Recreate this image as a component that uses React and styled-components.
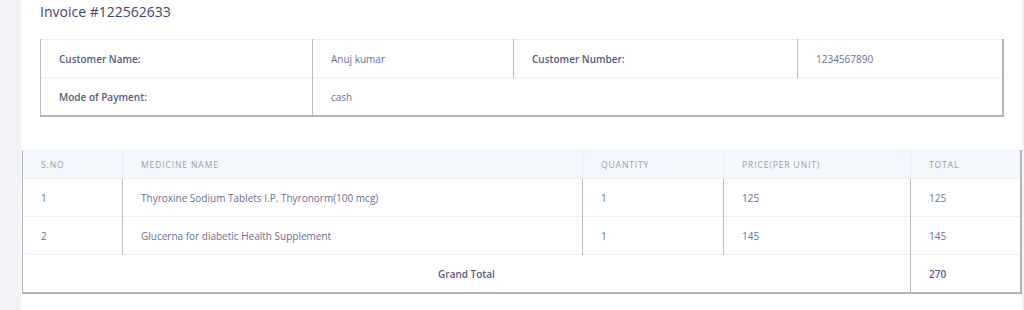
import React from "react";
import styled, { createGlobalStyle } from "styled-components";

const GlobalStyle = createGlobalStyle`
  html, body {
    margin: 0;
    padding: 0;
    background: #f2f3f8;
    font-family: "Open Sans", "Noto Sans", sans-serif;
  }
`;

const Page = styled.div`
  display: flex;
  padding: 0 2px 0 21px;
  min-height: 310px;
  box-sizing: border-box;
`;

const Card = styled.div`
  flex: 1;
  background: #fff;
  padding-bottom: 12px;
`;

const Title = styled.h3`
  margin: 0;
  padding: 2px 19px 0;
  font-size: 14px;
  line-height: 20px;
  font-weight: 500;
  color: #3f4566;
`;

const InfoTable = styled.table`
  width: calc(100% - 37px);
  margin: 17px 18px 0 19px;
  border-collapse: collapse;
  table-layout: fixed;
  border-top: 1px solid #f0f1f4;
  border-right: 2px solid #b4b4b4;
  border-bottom: 2px solid #b4b4b4;
`;

const ItemTable = styled.table`
  width: calc(100% - 1px);
  margin: 33px 0 0 1px;
  border-collapse: collapse;
  table-layout: fixed;
  border-right: 2px solid #b4b4b4;
  border-bottom: 2px solid #b4b4b4;
`;

const Row = styled.tr`
  border-top: 1px solid #eef0f4;
`;

const Cell = styled.td`
  height: 37px;
  padding: 0 18px;
  border-left: 1px solid #b9b9b9;
  font-size: 10px;
  font-weight: ${(p) => (p.$strong ? 600 : 400)};
  color: ${(p) => (p.$strong ? "#565c7d" : "#6a7090")};
  text-align: ${(p) => (p.$center ? "center" : "left")};
  white-space: nowrap;
`;

const HeadRow = styled.tr`
  background: #f4f7fb;
  border-top: 1px solid #eef1f5;
`;

const HeadCell = styled.th`
  height: 27px;
  padding: 0 18px;
  border-left: 1px solid #e9edf3;
  font-size: 8.5px;
  font-weight: 400;
  letter-spacing: 0.9px;
  text-transform: uppercase;
  text-align: left;
  color: #979db2;
  &:first-child {
    border-left: 1px solid #b9b9b9;
  }
`;

const items = [
  { no: 1, name: "Thyroxine Sodium Tablets I.P. Thyronorm(100 mcg)", qty: 1, price: 125 },
  { no: 2, name: "Glucerna for diabetic Health Supplement", qty: 1, price: 145 },
];

export default function App() {
  const grandTotal = items.reduce((sum, it) => sum + it.qty * it.price, 0);

  return (
    <Page>
      <GlobalStyle />
      <Card>
        <Title>Invoice #122562633</Title>

        <InfoTable>
          <colgroup>
            <col style={{ width: 272 }} />
            <col style={{ width: 201 }} />
            <col style={{ width: 284 }} />
            <col />
          </colgroup>
          <tbody>
            <Row>
              <Cell $strong>Customer Name:</Cell>
              <Cell>Anuj kumar</Cell>
              <Cell $strong>Customer Number:</Cell>
              <Cell>1234567890</Cell>
            </Row>
            <Row>
              <Cell $strong>Mode of Payment:</Cell>
              <Cell colSpan={3}>cash</Cell>
            </Row>
          </tbody>
        </InfoTable>

        <ItemTable>
          <colgroup>
            <col style={{ width: 100 }} />
            <col style={{ width: 460 }} />
            <col style={{ width: 141 }} />
            <col style={{ width: 187 }} />
            <col />
          </colgroup>
          <thead>
            <HeadRow>
              <HeadCell>S.No</HeadCell>
              <HeadCell>Medicine Name</HeadCell>
              <HeadCell>Quantity</HeadCell>
              <HeadCell>Price(per unit)</HeadCell>
              <HeadCell>Total</HeadCell>
            </HeadRow>
          </thead>
          <tbody>
            {items.map((it) => (
              <Row key={it.no}>
                <Cell>{it.no}</Cell>
                <Cell>{it.name}</Cell>
                <Cell>{it.qty}</Cell>
                <Cell>{it.price}</Cell>
                <Cell>{it.qty * it.price}</Cell>
              </Row>
            ))}
            <Row>
              <Cell colSpan={4} $strong $center>Grand Total</Cell>
              <Cell $strong>{grandTotal}</Cell>
            </Row>
          </tbody>
        </ItemTable>
      </Card>
    </Page>
  );
}
